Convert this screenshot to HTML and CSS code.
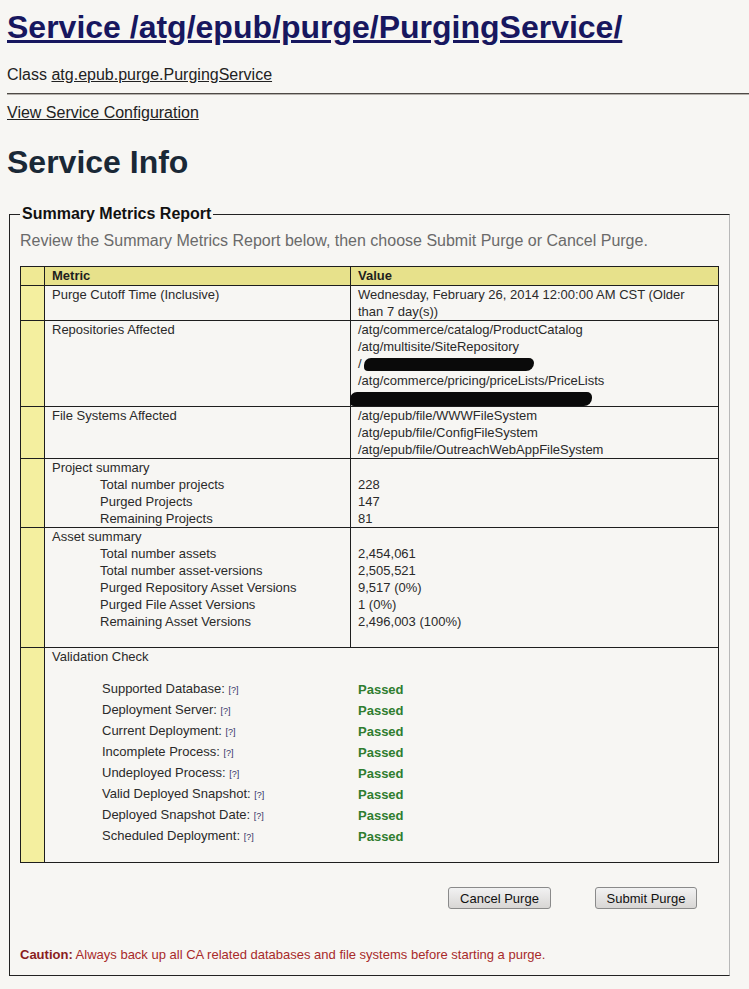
FILE: index.html
```html
<!DOCTYPE html>
<html>
<head>
<meta charset="utf-8">
<title>Service /atg/epub/purge/PurgingService/</title>
<link rel="stylesheet" href="styles.css">
</head>
<body>
<h1 class="title"><a href="#">Service /atg/epub/purge/PurgingService/</a></h1>
<p class="classline">Class <a href="#">atg.epub.purge.PurgingService</a></p>
<hr class="rule">
<p class="config"><a href="#">View Service Configuration</a></p>
<h1 class="info">Service Info</h1>

<fieldset class="report">
  <legend>Summary Metrics Report</legend>
  <p class="intro">Review the Summary Metrics Report below, then choose Submit Purge or Cancel Purge.</p>
  <table class="metrics">
    <colgroup><col class="c-mark"><col class="c-metric"><col class="c-value"></colgroup>
    <tr class="head"><td class="mark"></td><th>Metric</th><th>Value</th></tr>
    <tr>
      <td class="mark"></td>
      <td>Purge Cutoff Time (Inclusive)</td>
      <td>Wednesday, February 26, 2014 12:00:00 AM CST (Older than 7 day(s))</td>
    </tr>
    <tr>
      <td class="mark"></td>
      <td>Repositories Affected</td>
      <td>
        <div>/atg/commerce/catalog/ProductCatalog</div>
        <div>/atg/multisite/SiteRepository</div>
        <div>/<span class="redact r1"></span></div>
        <div>/atg/commerce/pricing/priceLists/PriceLists</div>
        <div><span class="redact r2"></span></div>
      </td>
    </tr>
    <tr>
      <td class="mark"></td>
      <td>File Systems Affected</td>
      <td>
        <div>/atg/epub/file/WWWFileSystem</div>
        <div>/atg/epub/file/ConfigFileSystem</div>
        <div>/atg/epub/file/OutreachWebAppFileSystem</div>
      </td>
    </tr>
    <tr>
      <td class="mark"></td>
      <td>
        <div>Project summary</div>
        <div class="sub">Total number projects</div>
        <div class="sub">Purged Projects</div>
        <div class="sub">Remaining Projects</div>
      </td>
      <td>
        <div class="blank"></div>
        <div>228</div>
        <div>147</div>
        <div>81</div>
      </td>
    </tr>
    <tr>
      <td class="mark"></td>
      <td>
        <div>Asset summary</div>
        <div class="sub">Total number assets</div>
        <div class="sub">Total number asset-versions</div>
        <div class="sub">Purged Repository Asset Versions</div>
        <div class="sub">Purged File Asset Versions</div>
        <div class="sub">Remaining Asset Versions</div>
        <div class="blank"></div>
      </td>
      <td>
        <div class="blank"></div>
        <div>2,454,061</div>
        <div>2,505,521</div>
        <div>9,517 (0%)</div>
        <div>1 (0%)</div>
        <div>2,496,003 (100%)</div>
        <div class="blank"></div>
      </td>
    </tr>
    <tr>
      <td class="mark"></td>
      <td colspan="2">
        <div>Validation Check</div>
        <div class="checks">
          <div class="check-label">Supported Database: <a class="help" href="#">[?]</a></div><div class="passed">Passed</div>
          <div class="check-label">Deployment Server: <a class="help" href="#">[?]</a></div><div class="passed">Passed</div>
          <div class="check-label">Current Deployment: <a class="help" href="#">[?]</a></div><div class="passed">Passed</div>
          <div class="check-label">Incomplete Process: <a class="help" href="#">[?]</a></div><div class="passed">Passed</div>
          <div class="check-label">Undeployed Process: <a class="help" href="#">[?]</a></div><div class="passed">Passed</div>
          <div class="check-label">Valid Deployed Snapshot: <a class="help" href="#">[?]</a></div><div class="passed">Passed</div>
          <div class="check-label">Deployed Snapshot Date: <a class="help" href="#">[?]</a></div><div class="passed">Passed</div>
          <div class="check-label">Scheduled Deployment: <a class="help" href="#">[?]</a></div><div class="passed">Passed</div>
        </div>
      </td>
    </tr>
  </table>
  <div class="actions">
    <button class="btn btn-cancel" type="button">Cancel Purge</button>
    <button class="btn btn-submit" type="button">Submit Purge</button>
  </div>
  <p class="caution"><b>Caution:</b> Always back up all CA related databases and file systems before starting a purge.</p>
</fieldset>
</body>
</html>
```

FILE: styles.css
```css
html, body {
  margin: 0;
  background: #f7f6f3;
}
body {
  padding: 9px 0 0 7px;
  font-family: "Liberation Sans", Arial, sans-serif;
  color: #222;
  font-size: 16px;
}
a { color: #222; }

.title {
  margin: 0;
  font-size: 32px;
  line-height: 37px;
  font-weight: bold;
}
.title a { color: #17175f; }

.classline {
  margin: 20px 0 0;
  font-size: 16px;
  line-height: 18px;
}

.rule {
  margin: 9px 0 0;
  border: 0;
  border-top: 1px solid #4e4a46;
  border-bottom: 1px solid #b5b1ac;
  height: 0;
}

.config {
  margin: 9px 0 0;
  font-size: 16px;
  line-height: 18px;
}

.info {
  margin: 22px 0 0;
  font-size: 32px;
  line-height: 37px;
  font-weight: bold;
  color: #1a2836;
}

.report {
  margin: 24px 19px 0 2px;
  padding: 9px 10px 13px 10px;
  border: 1px solid #222;
  border-right-color: #b8b8b8;
  min-width: 0;
}
.report legend {
  padding: 0 2px;
  font-size: 16px;
  line-height: 18px;
  font-weight: bold;
  color: #111;
}

.intro {
  margin: 0;
  font-size: 16px;
  line-height: 18px;
  color: #6a6a6a;
}

.metrics {
  margin-top: 16px;
  width: 100%;
  border-collapse: collapse;
  table-layout: fixed;
  font-size: 13px;
  line-height: 17px;
}
.c-mark { width: 24px; }
.c-metric { width: 306px; }
.metrics td, .metrics th {
  border: 1px solid #1e1e1e;
  padding: 0 7px;
  vertical-align: top;
  text-align: left;
  color: #2a2a2a;
}
.metrics th {
  font-weight: bold;
  line-height: 18px;
  background: #e7e18b;
  color: #1e1e1e;
}
.metrics td.mark {
  background: #f4ef9f;
  padding: 0;
}
.metrics .head td.mark { background: #efe994; }

.sub { padding-left: 48px; }
.blank { height: 17px; }

.redact {
  display: inline-block;
  background: #0a0a0a;
  border-radius: 7px 5px 8px 4px;
  vertical-align: middle;
}
.r1 { width: 170px; height: 13px; margin-left: 2px; }
.r2 { width: 242px; height: 14px; margin-left: -8px; }

.checks {
  display: grid;
  grid-template-columns: 256px auto;
  grid-auto-rows: 21px;
  align-items: center;
  margin: 14px 0 15px 50px;
}
.check-label { color: #2a2a2a; }
.help {
  font-size: 9px;
  color: #333366;
  text-decoration: none;
}
.passed {
  font-weight: bold;
  color: #2f7d2f;
}

.actions {
  display: flex;
  justify-content: flex-end;
  gap: 44px;
  margin-top: 24px;
  padding-right: 22px;
}
.btn {
  height: 22px;
  padding: 0;
  white-space: nowrap;
  font-family: "Liberation Sans", Arial, sans-serif;
  font-size: 13px;
  color: #111;
  border: 1px solid #8a8a8a;
  border-radius: 3px;
  background: linear-gradient(#f2f2f2, #d8d6d4);
}
.btn-cancel { width: 103px; }
.btn-submit { width: 102px; }

.caution {
  margin: 38px 0 0;
  font-size: 13px;
  line-height: 15px;
  color: #a82a2a;
}
.caution b { color: #8a1e1e; }
```
